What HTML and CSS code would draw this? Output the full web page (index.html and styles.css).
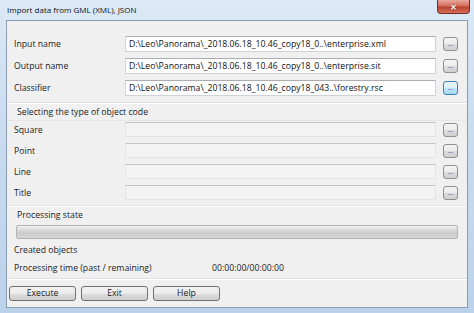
FILE: index.html
```html
<!DOCTYPE html>
<html lang="en">
<head>
  <meta charset="UTF-8" />
  <title>Import data from GML (XML), JSON</title>
  <link rel="stylesheet" href="styles.css">
</head>
<body>

<div class="window">
  <div class="titlebar">
    <span class="title">Import data from GML (XML), JSON</span>
    <span class="close">&#x2715;</span>
  </div>

  <div class="client">
    <!-- File names -->
    <div class="files">
      <div class="row">
        <span class="label">Input name</span>
        <span class="edit">D:\Leo\Panorama\_2018.06.18_10.46_copy18_0..\enterprise.xml</span>
        <span class="dots">...</span>
      </div>
      <div class="row">
        <span class="label">Output name</span>
        <span class="edit">D:\Leo\Panorama\_2018.06.18_10.46_copy18_0..\enterprise.sit</span>
        <span class="dots">...</span>
      </div>
      <div class="row">
        <span class="label">Classifier</span>
        <span class="edit">D:\Leo\Panorama\_2018.06.18_10.46_copy18_043..\forestry.rsc</span>
        <span class="dots focused">...</span>
      </div>
    </div>

    <!-- Object codes -->
    <div class="codes">
      <div class="head">Selecting the type of object code</div>
      <div class="code-rows">
        <div class="row small">
          <span class="label">Square</span>
          <span class="edit disabled"></span>
          <span class="dots">...</span>
        </div>
        <div class="row small">
          <span class="label">Point</span>
          <span class="edit disabled"></span>
          <span class="dots">...</span>
        </div>
        <div class="row small">
          <span class="label">Line</span>
          <span class="edit disabled"></span>
          <span class="dots">...</span>
        </div>
        <div class="row small">
          <span class="label">Title</span>
          <span class="edit disabled"></span>
          <span class="dots">...</span>
        </div>
      </div>
    </div>

    <!-- Processing state -->
    <div class="state">
      <div class="head">Processing state</div>
      <div class="progress"></div>
    </div>

    <div class="info">
      <div class="info-row">Created objects</div>
      <div class="info-row">
        <span class="info-label">Processing time (past / remaining)</span>
        <span>00:00:00/00:00:00</span>
      </div>
    </div>

    <div class="actions">
      <button class="btn">Execute</button>
      <button class="btn">Exit</button>
      <button class="btn">Help</button>
    </div>
  </div>
</div>

</body>
</html>
```

FILE: styles.css
```css
body {
  margin: 0;
  width: 474px;
  height: 313px;
  overflow: hidden;
  font-family: 'Open Sans', 'Noto Sans', sans-serif;
  font-size: 8.7px;
  color: #1a1a1a;
}

.window {
  height: 313px;
  display: flex;
  flex-direction: column;
  background: linear-gradient(to bottom, #dce9f6 0%, #c9dcf0 40%, #bcd2ea 100%);
}

.titlebar {
  height: 20px;
  display: flex;
  justify-content: space-between;
  align-items: flex-start;
  padding-left: 7px;
}

.title {
  font-size: 8px;
  line-height: 20px;
  color: #111;
}

.close {
  width: 33px;
  height: 14px;
  margin-right: 4px;
  border: 1px solid #7a2c22;
  border-top: none;
  border-radius: 0 0 4px 4px;
  background: linear-gradient(to bottom, #e9a89c 0%, #d46d5c 45%, #c0412e 55%, #d2705c 100%);
  color: #fff;
  font-size: 8px;
  font-weight: bold;
  line-height: 14px;
  text-align: center;
  text-shadow: 0 0 2px #5a1a10;
  box-sizing: border-box;
}

.client {
  flex: 1;
  margin: 0 6px 5px 6px;
  border: 1px solid #8c9db3;
  background: #f0f0f0;
  display: flex;
  flex-direction: column;
}

.files {
  height: 82px;
  box-sizing: border-box;
  padding: 15px 0 0 7px;
  display: flex;
  flex-direction: column;
  gap: 6px;
  border-bottom: 1px solid #e2e2e2;
}

.row {
  display: flex;
  align-items: center;
  height: 16px;
}

.row.small {
  height: 15px;
}

.label {
  width: 111px;
}

.edit {
  width: 311px;
  height: 100%;
  box-sizing: border-box;
  background: #fff;
  border: 1px solid #cfd3d8;
  border-top-color: #abadb3;
  padding-left: 3px;
  line-height: 14px;
  white-space: nowrap;
  overflow: hidden;
  color: #111;
}

.edit.disabled {
  background: #f3f3f3;
  border-color: #e4e4e4;
  border-top-color: #c4c4c4;
}

.dots {
  width: 15px;
  height: 14px;
  margin-left: 7px;
  box-sizing: border-box;
  border: 1px solid #8f8f8f;
  border-radius: 3px;
  background: linear-gradient(to bottom, #f4f4f4 0%, #ebebeb 50%, #dcdcdc 51%, #d0d0d0 100%);
  font-size: 7px;
  line-height: 12px;
  text-align: center;
  color: #3a4a66;
}

.dots.focused {
  border-color: #3c7fb1;
  background: linear-gradient(to bottom, #eaf6fd 0%, #d9f0fc 50%, #bee6fd 51%, #a7d9f5 100%);
}

.codes {
  height: 103px;
  box-sizing: border-box;
  border-top: 1px solid #fff;
  border-bottom: 1px solid #e2e2e2;
}

.head {
  height: 16px;
  line-height: 16px;
  padding-left: 10px;
  border-bottom: 1px solid #e6e6e6;
}

.code-rows {
  padding: 1px 0 0 7px;
  display: flex;
  flex-direction: column;
  gap: 6px;
}

.state {
  height: 37px;
  box-sizing: border-box;
  border-top: 1px solid #fff;
}

.state .head {
  border-bottom: none;
}

.progress {
  margin: 2px 0 0 9px;
  width: 442px;
  height: 14px;
  box-sizing: border-box;
  border: 1px solid #b2b2b2;
  border-radius: 2px;
  background: linear-gradient(to bottom, #f2f2f2 0%, #dadada 35%, #cbcbcb 60%, #d6d6d6 100%);
}

.info {
  height: 36px;
  box-sizing: border-box;
  padding: 0 0 0 7px;
  border-bottom: 1px solid #e0e0e0;
}

.info-row {
  height: 18px;
  line-height: 14px;
  display: flex;
}

.info-label {
  width: 198px;
}

.actions {
  border-top: 1px solid #fff;
  padding: 6px 0 0 2px;
  display: flex;
  gap: 5px;
}

.btn {
  width: 67px;
  height: 15px;
  padding: 0;
  border: 1px solid #707070;
  border-radius: 3px;
  background: linear-gradient(to bottom, #f2f2f2 0%, #ebebeb 50%, #dddddd 51%, #cfcfcf 100%);
  font-family: 'Open Sans', 'Noto Sans', sans-serif;
  font-size: 8.7px;
  line-height: 13px;
  color: #1a1a1a;
}
```
